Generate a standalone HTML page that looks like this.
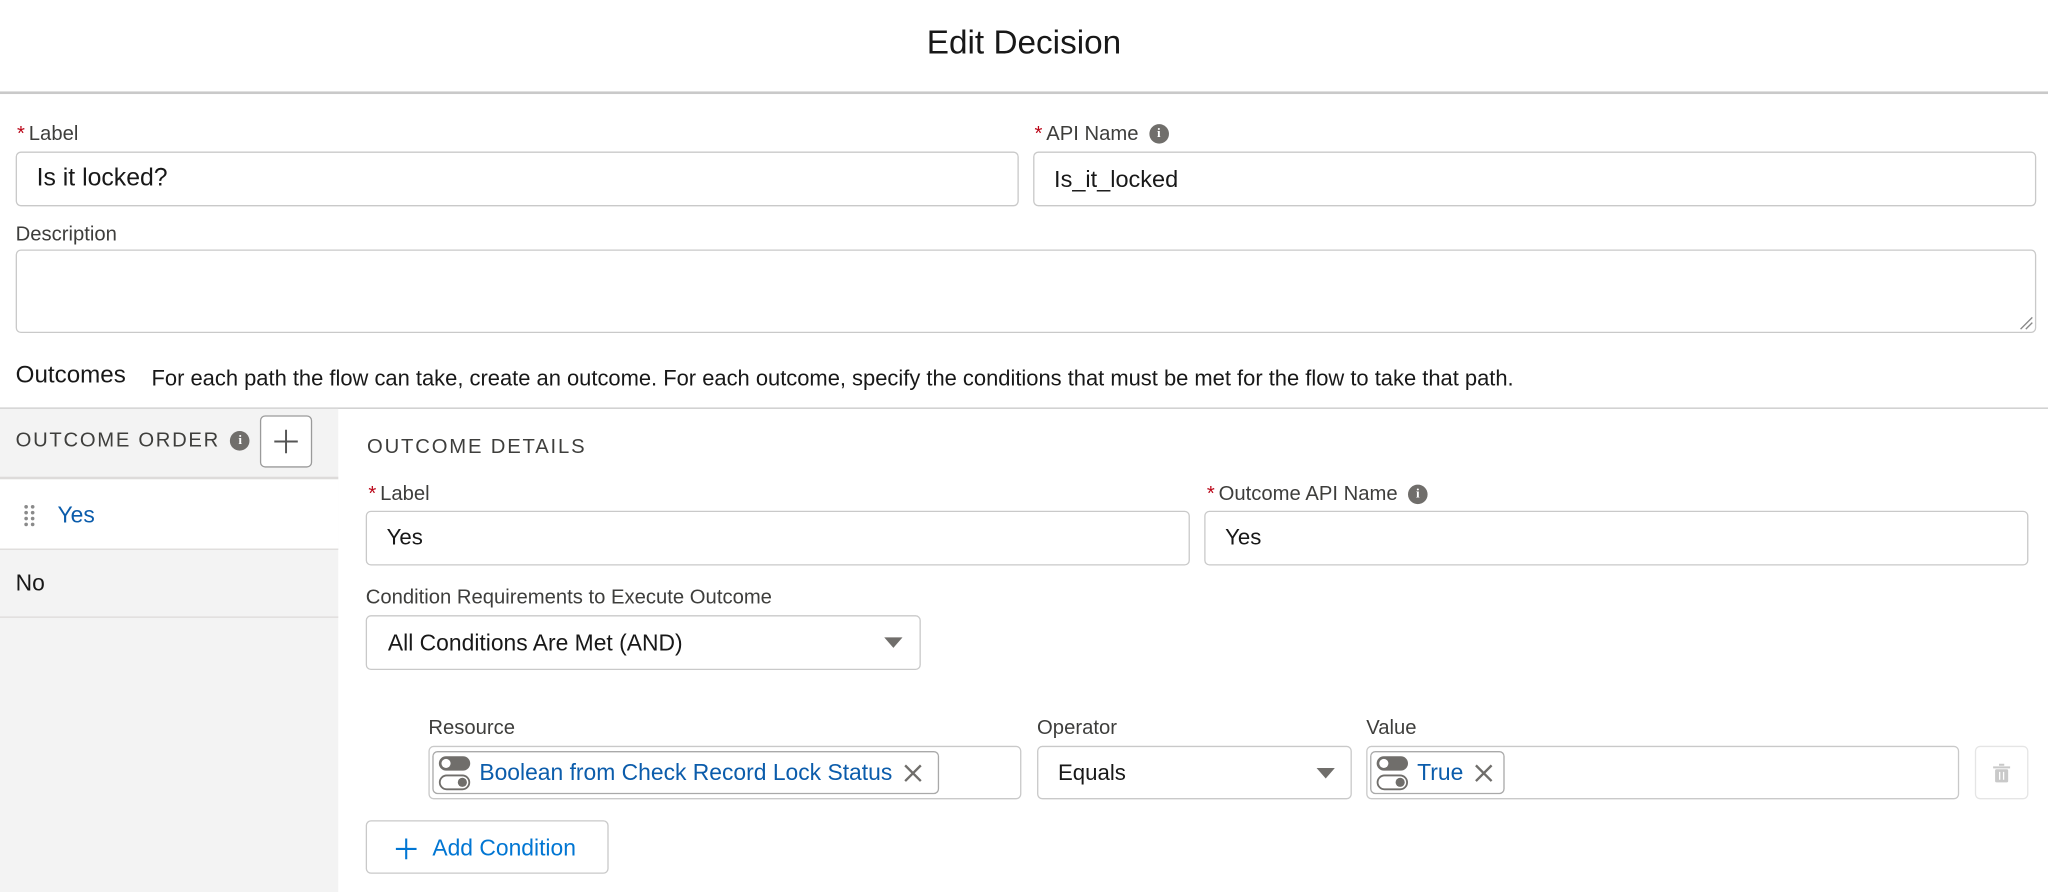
<!DOCTYPE html>
<html><head><meta charset="utf-8"><style>
html,body{margin:0;padding:0;width:2048px;height:892px;overflow:hidden;background:#fff;font-family:"Liberation Sans",Arial,sans-serif;color:#181818}
#w{position:absolute;left:0;top:0;width:1568px;height:683px;transform:scale(1.30612);transform-origin:0 0}
.a{position:absolute}
.lbl{position:absolute;font-size:15.5px;color:#3e3e3c;white-space:nowrap}
.req{color:#ba0517;margin-right:3px}
.inp{position:absolute;border:1px solid #c9c9c9;border-radius:4px;background:#fff;box-sizing:border-box;font-size:16.5px;color:#181818;padding-left:15px;display:flex;align-items:center;white-space:nowrap}
.info{display:inline-block;width:15px;height:15px;border-radius:50%;background:#706e6b;color:#fff;font-size:10px;font-weight:bold;text-align:center;line-height:15px;font-family:"Liberation Serif",serif;vertical-align:middle;margin-left:8px}
.caret{position:absolute;width:0;height:0;border-left:7px solid transparent;border-right:7px solid transparent;border-top:8px solid #706e6b}
.pill{position:absolute;border:1px solid #a9a9a9;border-radius:4px;box-sizing:border-box;display:flex;align-items:center;font-size:17.5px;color:#0b5cab;white-space:nowrap}
.hl{position:absolute;left:0;height:1px;background:#dddbda}
</style></head><body><div id="w">
<div class="a" style="left:0;top:19px;width:1568px;text-align:center;font-size:25.5px;color:#181818">Edit Decision</div>
<div class="a" style="left:0;top:70px;width:1568px;height:2px;background:#c9c9c9"></div>

<div class="lbl" style="left:13px;top:94px"><span class="req">*</span>Label</div>
<div class="inp" style="left:12px;top:116px;width:768px;height:42px;font-size:19px">Is it locked?</div>
<div class="lbl" style="left:792px;top:94px"><span class="req">*</span>API Name<span class="info">i</span></div>
<div class="inp" style="left:791px;top:116px;width:768px;height:42px;font-size:18px">Is_it_locked</div>
<div class="lbl" style="left:12px;top:171px">Description</div>
<div class="inp" style="left:12px;top:191px;width:1547px;height:64px"></div>
<svg class="a" style="left:1545px;top:241px" width="12" height="12"><path d="M2 11L11 2M6 11L11 6" stroke="#888" stroke-width="1"/></svg>

<div class="a" style="left:12px;top:276px;font-size:18.5px;color:#181818">Outcomes</div>
<div class="a" style="left:116px;top:280px;font-size:16.8px;color:#181818;white-space:nowrap">For each path the flow can take, create an outcome. For each outcome, specify the conditions that must be met for the flow to take that path.</div>
<div class="hl" style="top:312px;width:1568px;background:#c9c9c9"></div>

<div class="a" style="left:0;top:313px;width:259px;height:370px;background:#f3f3f3"></div>
<div class="a" style="left:12px;top:329px;font-size:15.5px;letter-spacing:1.3px;color:#3e3e3c;white-space:nowrap">OUTCOME ORDER<span class="info" style="letter-spacing:0">i</span></div>
<div class="a" style="left:199px;top:318px;width:40px;height:40px;border:1px solid #9a9a9a;border-radius:4px;background:#fff;box-sizing:border-box"></div>
<svg class="a" style="left:209px;top:328px" width="20" height="20"><path d="M10 1V19M1 10H19" stroke="#555" stroke-width="1.5"/></svg>
<div class="hl" style="top:365px;width:259px;height:2px"></div>
<div class="a" style="left:0;top:367px;width:259px;height:53px;background:#fff"></div>
<svg class="a" style="left:18px;top:386px" width="10" height="18"><g fill="#8a8a8a"><circle cx="2" cy="2" r="1.4"/><circle cx="7" cy="2" r="1.4"/><circle cx="2" cy="6.5" r="1.4"/><circle cx="7" cy="6.5" r="1.4"/><circle cx="2" cy="11" r="1.4"/><circle cx="7" cy="11" r="1.4"/><circle cx="2" cy="15.5" r="1.4"/><circle cx="7" cy="15.5" r="1.4"/></g></svg>
<div class="a" style="left:44px;top:384px;font-size:17.5px;color:#0b5cab">Yes</div>
<div class="hl" style="top:420px;width:259px"></div>
<div class="a" style="left:12px;top:436px;font-size:17.5px">No</div>
<div class="hl" style="top:472px;width:259px"></div>

<div class="a" style="left:281px;top:334px;font-size:15.5px;letter-spacing:1.4px;color:#3e3e3c;white-space:nowrap">OUTCOME DETAILS</div>
<div class="lbl" style="left:282px;top:370px"><span class="req">*</span>Label</div>
<div class="inp" style="left:280px;top:391px;width:631px;height:42px;font-size:17px">Yes</div>
<div class="lbl" style="left:924px;top:370px"><span class="req">*</span>Outcome API Name<span class="info">i</span></div>
<div class="inp" style="left:922px;top:391px;width:631px;height:42px;font-size:17px">Yes</div>
<div class="lbl" style="left:280px;top:449px">Condition Requirements to Execute Outcome</div>
<div class="inp" style="left:280px;top:471px;width:425px;height:42px;padding-left:16px;font-size:17.5px">All Conditions Are Met (AND)</div>
<div class="caret" style="left:677px;top:488px"></div>

<div class="lbl" style="left:328px;top:549px">Resource</div>
<div class="inp" style="left:328px;top:571px;width:454px;height:41px;padding-left:0"></div>
<div class="pill" style="left:331px;top:575px;width:388px;height:33px">
<svg style="margin-left:3px" width="26" height="28" viewBox="0 0 26 28"><rect x="1" y="1" width="24" height="11" rx="5.5" fill="#706e6b"/><circle cx="6.5" cy="6.5" r="3.5" fill="#fff"/><rect x="1.7" y="15.7" width="22.6" height="10.6" rx="5.3" fill="#fff" stroke="#706e6b" stroke-width="1.4"/><circle cx="19" cy="21" r="3.5" fill="#706e6b"/></svg>
<span style="margin-left:6px">Boolean from Check Record Lock Status</span>
<svg style="margin-left:9px" width="14" height="14"><path d="M1 1L13 13M13 1L1 13" stroke="#706e6b" stroke-width="1.8"/></svg></div>

<div class="lbl" style="left:794px;top:549px">Operator</div>
<div class="inp" style="left:794px;top:571px;width:241px;height:41px;font-size:17px">Equals</div>
<div class="caret" style="left:1008px;top:588px"></div>

<div class="lbl" style="left:1046px;top:549px">Value</div>
<div class="inp" style="left:1046px;top:571px;width:454px;height:41px;padding-left:0"></div>
<div class="pill" style="left:1049px;top:575px;width:103px;height:33px">
<svg style="margin-left:3px" width="26" height="28" viewBox="0 0 26 28"><rect x="1" y="1" width="24" height="11" rx="5.5" fill="#706e6b"/><circle cx="6.5" cy="6.5" r="3.5" fill="#fff"/><rect x="1.7" y="15.7" width="22.6" height="10.6" rx="5.3" fill="#fff" stroke="#706e6b" stroke-width="1.4"/><circle cx="19" cy="21" r="3.5" fill="#706e6b"/></svg>
<span style="margin-left:6px">True</span>
<svg style="margin-left:9px" width="14" height="14"><path d="M1 1L13 13M13 1L1 13" stroke="#706e6b" stroke-width="1.8"/></svg></div>

<div class="a" style="left:1512px;top:571px;width:41px;height:41px;border:1px solid #e5e5e5;border-radius:4px;box-sizing:border-box"></div>
<svg class="a" style="left:1525px;top:583px" width="15" height="17"><path d="M5.5 2.5h4M1 4.5h13" stroke="#c9c9c9" stroke-width="1.5"/><rect x="2.5" y="6" width="10" height="10" rx="1" fill="#c9c9c9"/><path d="M6 8v6M9 8v6" stroke="#fff" stroke-width="1"/></svg>

<div class="a" style="left:280px;top:628px;width:186px;height:41px;border:1px solid #c9c9c9;border-radius:4px;box-sizing:border-box"></div>
<svg class="a" style="left:303px;top:642px" width="16" height="16"><path d="M8 0V16M0 8H16" stroke="#0176d3" stroke-width="1.6"/></svg>
<div class="a" style="left:331px;top:639px;font-size:17.5px;color:#0176d3;white-space:nowrap">Add Condition</div>
</div></body></html>
